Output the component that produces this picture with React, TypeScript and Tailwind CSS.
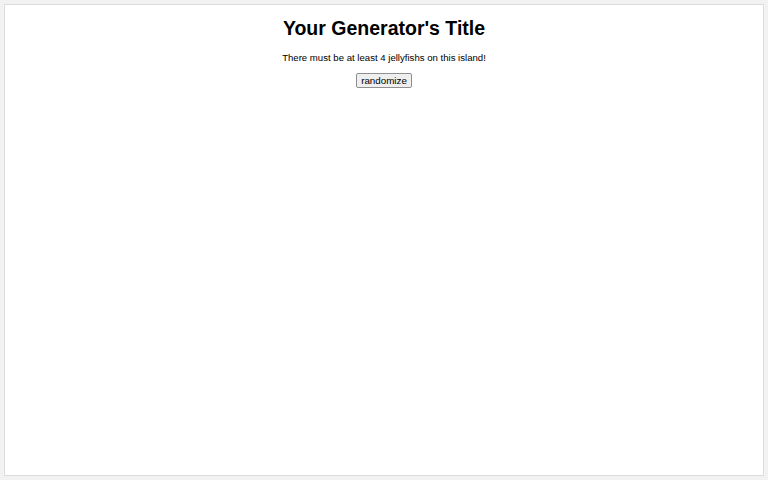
export default function App() {
  return (
    <div className="h-[480px] w-[768px] bg-[#f2f2f2] px-[4px] pt-[4px] pb-[4px] font-['Liberation_Sans',Arial,sans-serif] text-black">
      <div className="flex h-[472px] flex-col items-center border border-[#dcdcdc] bg-white">
        <h1 className="mt-[11px] text-[19.5px] font-bold leading-[24px]">Your Generator's Title</h1>
        <p className="mt-[12px] text-[9.6px] leading-[12px]">There must be at least 4 jellyfishs on this island!</p>
        <button className="mt-[9px] h-[15px] rounded-[2px] border border-[#8f8f8f] bg-[#efefef] px-[4px] text-[9.8px] leading-[12px]">
          randomize
        </button>
      </div>
    </div>
  );
}
